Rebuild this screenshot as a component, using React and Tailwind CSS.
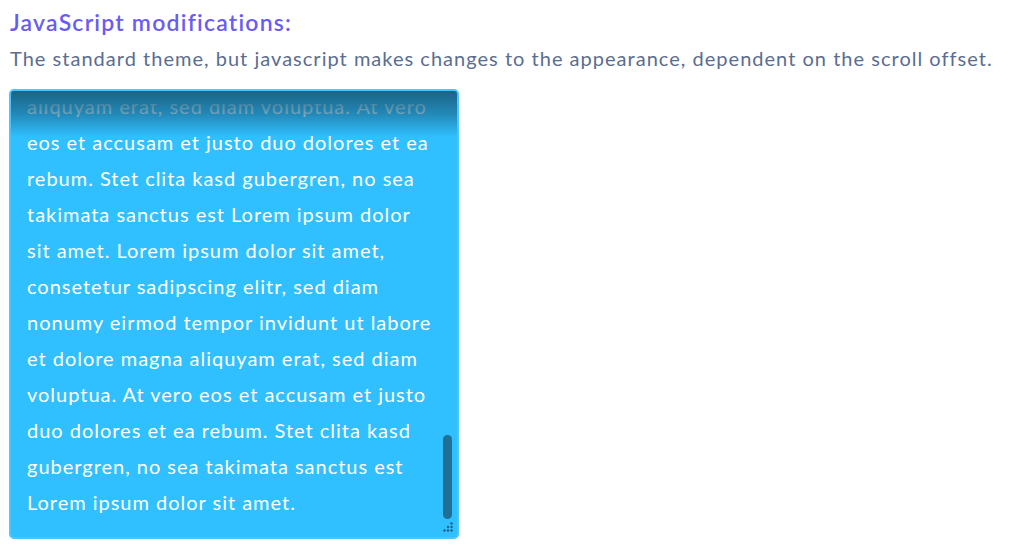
import React from "react";

const lines = [
  "aliquyam erat, sed diam voluptua. At vero",
  "eos et accusam et justo duo dolores et ea",
  "rebum. Stet clita kasd gubergren, no sea",
  "takimata sanctus est Lorem ipsum dolor",
  "sit amet. Lorem ipsum dolor sit amet,",
  "consetetur sadipscing elitr, sed diam",
  "nonumy eirmod tempor invidunt ut labore",
  "et dolore magna aliquyam erat, sed diam",
  "voluptua. At vero eos et accusam et justo",
  "duo dolores et ea rebum. Stet clita kasd",
  "gubergren, no sea takimata sanctus est",
  "Lorem ipsum dolor sit amet.",
];

export default function App() {
  return (
    <div
      className="bg-white w-[1013px] h-[550px] overflow-hidden"
      style={{ fontFamily: "Lato, 'Noto Sans', sans-serif" }}
    >
      <div className="pl-[10px] pt-[8px]">
        <h2 className="text-[23px] leading-[28px] font-semibold text-[#6a5cf2] tracking-[1.22px] whitespace-nowrap">
          JavaScript modifications:
        </h2>
        <p className="mt-[10px] text-[20px] leading-[24px] text-[#5b6d8f] tracking-[1.02px] whitespace-nowrap">
          The standard theme, but javascript makes changes to the appearance, dependent on the scroll offset.
        </p>
      </div>
      <div className="ml-[9px] mt-[19px] w-[450px] h-[450px] relative rounded-[5px] border-2 border-[#46c7ff] bg-[#30bfff] overflow-hidden">
        <div className="mt-[13px] h-[423px] overflow-hidden pl-[16px] pr-[20px]">
          <div className="-mt-[16px] text-white text-[20px] leading-[36px] tracking-[0.98px]">
            {lines.map((l, i) => (
              <div key={i} className="whitespace-nowrap">{l}</div>
            ))}
          </div>
        </div>
        <div className="absolute left-0 right-0 top-0 h-[46px] bg-gradient-to-b from-[#1a6487] via-[#1a6487]/60 to-[#1a6487]/0 pointer-events-none" />
        <div className="absolute right-[5px] top-[344px] w-[9px] h-[84px] rounded-full bg-[#1f6f97]" />
        <svg className="absolute right-[3px] bottom-[4px]" width="14" height="14" viewBox="0 0 14 14">
          <g fill="#1d5f80">
            <circle cx="11.5" cy="4.5" r="1.2" />
            <circle cx="8" cy="8" r="1.2" />
            <circle cx="11.5" cy="8" r="1.2" />
            <circle cx="4.5" cy="11.5" r="1.2" />
            <circle cx="8" cy="11.5" r="1.2" />
            <circle cx="11.5" cy="11.5" r="1.2" />
          </g>
        </svg>
      </div>
    </div>
  );
}
